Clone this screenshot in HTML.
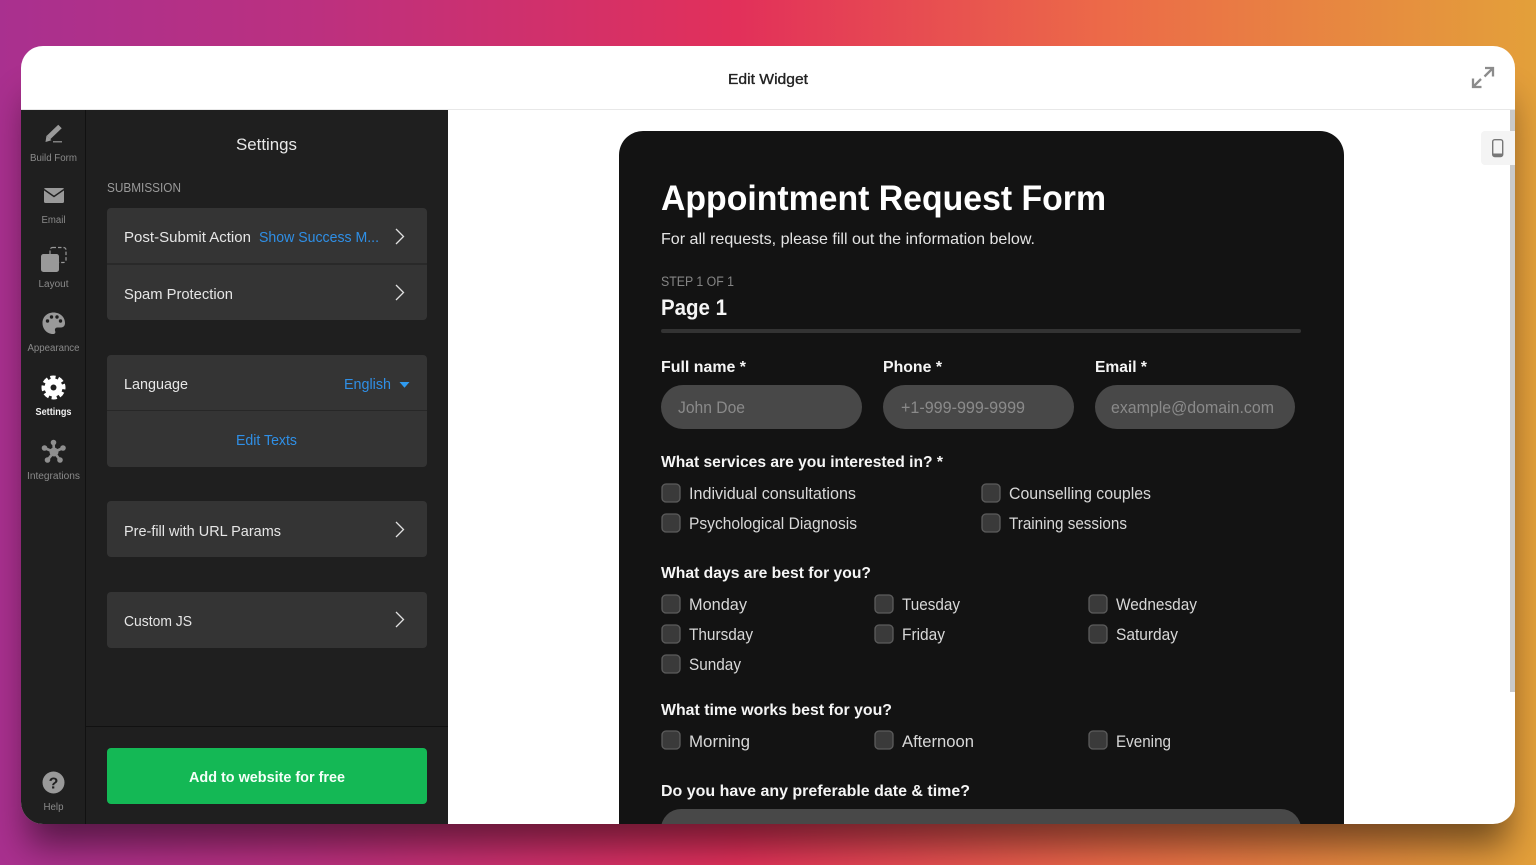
<!DOCTYPE html>
<html lang="en">
<head>
<meta charset="utf-8">
<title>Edit Widget</title>
<style>
html,body{margin:0;padding:0;width:1536px;height:865px;overflow:hidden;background:#c0306f}
svg{display:block}
text{font-family:"Liberation Sans",sans-serif;white-space:pre}
.b{font-weight:700}
.lab{fill:#e8e8e8;font-size:16px}
.q{fill:#f5f5f5;font-size:15.5px;font-weight:700}
.ph{fill:#8a8a8a;font-size:16.5px}
.opt{fill:#d8d8d8;font-size:16.5px}
.nav{fill:#8a8a8a;font-size:10px}
.cb{fill:#3a3a3a;stroke:#5c5c5c;stroke-width:1.3}
.row{fill:#e6e6e6;font-size:15px}
.blue{fill:#2f8fe6;font-size:15px}
.chev{fill:none;stroke:#e0e0e0;stroke-width:1.3}
</style>
</head>
<body>
<svg width="1536" height="865" viewBox="0 0 1536 865" xmlns="http://www.w3.org/2000/svg">
<defs>
<linearGradient id="bg" x1="0" y1="0" x2="1" y2="0">
<stop offset="0" stop-color="#a9308f"/>
<stop offset=".2" stop-color="#bb3080"/>
<stop offset=".48" stop-color="#e2305a"/>
<stop offset=".72" stop-color="#ec6a48"/>
<stop offset="1" stop-color="#e3a03a"/>
</linearGradient>
<filter id="sh" x="-10%" y="-15%" width="120%" height="130%"><feGaussianBlur stdDeviation="18"/></filter>
<clipPath id="win"><rect x="21" y="46" width="1494" height="778" rx="22"/></clipPath>
</defs>

<rect width="1536" height="865" fill="url(#bg)"/>
<rect x="28" y="100" width="1480" height="745" fill="#000" opacity=".5" filter="url(#sh)"/>

<g clip-path="url(#win)">
<rect x="21" y="46" width="1494" height="778" fill="#fff"/>
<rect x="21" y="109" width="1494" height="1" fill="#e8e8e8"/>
<rect x="21" y="110" width="427" height="714" fill="#1f1f1f"/>
<rect x="85" y="110" width="1" height="714" fill="#111"/>
<rect x="86" y="726" width="362" height="1" fill="#111"/>
<rect x="1510" y="110" width="5" height="582" fill="#c9c9c9"/>

<!-- form card -->
<rect x="619" y="131" width="725" height="760" rx="24" fill="#131313"/>
<text x="661" y="210" class="b" font-size="35" fill="#fff" textLength="445" lengthAdjust="spacingAndGlyphs">Appointment Request Form</text>
<text x="661" y="244" font-size="16" fill="#e4e4e4" textLength="374" lengthAdjust="spacingAndGlyphs">For all requests, please fill out the information below.</text>
<text x="661" y="286" font-size="13.5" fill="#858585" textLength="73" lengthAdjust="spacingAndGlyphs">STEP 1 OF 1</text>
<text x="661" y="315" class="b" font-size="22" fill="#f5f5f5" textLength="66" lengthAdjust="spacingAndGlyphs">Page 1</text>
<rect x="661" y="329" width="640" height="4" rx="2" fill="#333"/>

<text x="661" y="372" class="q" font-size="16" textLength="85" lengthAdjust="spacingAndGlyphs">Full name *</text>
<text x="883" y="372" class="q" textLength="59" lengthAdjust="spacingAndGlyphs">Phone *</text>
<text x="1095" y="372" class="q" textLength="52" lengthAdjust="spacingAndGlyphs">Email *</text>

<rect x="661" y="385" width="201" height="44" rx="22" fill="#484848"/>
<rect x="883" y="385" width="191" height="44" rx="22" fill="#484848"/>
<rect x="1095" y="385" width="200" height="44" rx="22" fill="#484848"/>
<text x="678" y="413" class="ph" textLength="67" lengthAdjust="spacingAndGlyphs">John Doe</text>
<text x="901" y="413" class="ph" textLength="124" lengthAdjust="spacingAndGlyphs">+1-999-999-9999</text>
<text x="1111" y="413" class="ph" textLength="163" lengthAdjust="spacingAndGlyphs">example@domain.com</text>

<text x="661" y="467" class="q" textLength="282" lengthAdjust="spacingAndGlyphs">What services are you interested in? *</text>
<rect class="cb" x="662" y="484" width="18" height="18" rx="4"/>
<rect class="cb" x="982" y="484" width="18" height="18" rx="4"/>
<rect class="cb" x="662" y="514" width="18" height="18" rx="4"/>
<rect class="cb" x="982" y="514" width="18" height="18" rx="4"/>
<text x="689" y="499" class="opt" textLength="167" lengthAdjust="spacingAndGlyphs">Individual consultations</text>
<text x="1009" y="499" class="opt" textLength="142" lengthAdjust="spacingAndGlyphs">Counselling couples</text>
<text x="689" y="529" class="opt" textLength="168" lengthAdjust="spacingAndGlyphs">Psychological Diagnosis</text>
<text x="1009" y="529" class="opt" textLength="118" lengthAdjust="spacingAndGlyphs">Training sessions</text>

<text x="661" y="578" class="q" textLength="210" lengthAdjust="spacingAndGlyphs">What days are best for you?</text>
<rect class="cb" x="662" y="595" width="18" height="18" rx="4"/>
<rect class="cb" x="875" y="595" width="18" height="18" rx="4"/>
<rect class="cb" x="1089" y="595" width="18" height="18" rx="4"/>
<rect class="cb" x="662" y="625" width="18" height="18" rx="4"/>
<rect class="cb" x="875" y="625" width="18" height="18" rx="4"/>
<rect class="cb" x="1089" y="625" width="18" height="18" rx="4"/>
<rect class="cb" x="662" y="655" width="18" height="18" rx="4"/>
<text x="689" y="610" class="opt" textLength="58" lengthAdjust="spacingAndGlyphs">Monday</text>
<text x="902" y="610" class="opt" textLength="58" lengthAdjust="spacingAndGlyphs">Tuesday</text>
<text x="1116" y="610" class="opt" textLength="81" lengthAdjust="spacingAndGlyphs">Wednesday</text>
<text x="689" y="640" class="opt" textLength="64" lengthAdjust="spacingAndGlyphs">Thursday</text>
<text x="902" y="640" class="opt" textLength="43" lengthAdjust="spacingAndGlyphs">Friday</text>
<text x="1116" y="640" class="opt" textLength="62" lengthAdjust="spacingAndGlyphs">Saturday</text>
<text x="689" y="670" class="opt" textLength="52" lengthAdjust="spacingAndGlyphs">Sunday</text>

<text x="661" y="715" class="q" textLength="231" lengthAdjust="spacingAndGlyphs">What time works best for you?</text>
<rect class="cb" x="662" y="731" width="18" height="18" rx="4"/>
<rect class="cb" x="875" y="731" width="18" height="18" rx="4"/>
<rect class="cb" x="1089" y="731" width="18" height="18" rx="4"/>
<text x="689" y="747" class="opt" textLength="61" lengthAdjust="spacingAndGlyphs">Morning</text>
<text x="902" y="747" class="opt" textLength="72" lengthAdjust="spacingAndGlyphs">Afternoon</text>
<text x="1116" y="747" class="opt" textLength="55" lengthAdjust="spacingAndGlyphs">Evening</text>

<text x="661" y="796" class="q" textLength="309" lengthAdjust="spacingAndGlyphs">Do you have any preferable date &amp; time?</text>
<rect x="661" y="809" width="640" height="60" rx="20" fill="#484848"/>

<!-- settings panel -->
<text x="266.500" y="150" text-anchor="middle" font-size="17" fill="#e8e8e8" textLength="61" lengthAdjust="spacingAndGlyphs">Settings</text>
<text x="107" y="192" font-size="12.500" fill="#9a9a9a" textLength="74" lengthAdjust="spacingAndGlyphs">SUBMISSION</text>

<rect x="107" y="208" width="320" height="112" rx="4" fill="#343434"/>
<rect x="107" y="263" width="320" height="2" fill="#292929"/>
<text x="124" y="242" class="row" textLength="127" lengthAdjust="spacingAndGlyphs">Post-Submit Action</text>
<text x="259" y="242" class="blue" textLength="120" lengthAdjust="spacingAndGlyphs">Show Success M...</text>
<path class="chev" d="M396 229l7.500 7.500-7.500 7.500"/>
<text x="124" y="299" class="row" textLength="109" lengthAdjust="spacingAndGlyphs">Spam Protection</text>
<path class="chev" d="M396 285l7.500 7.500-7.500 7.500"/>

<rect x="107" y="355" width="320" height="112" rx="4" fill="#343434"/>
<rect x="107" y="410" width="320" height="1" fill="#272727"/>
<text x="124" y="389" class="row" textLength="64" lengthAdjust="spacingAndGlyphs">Language</text>
<text x="344" y="389" class="blue" textLength="47" lengthAdjust="spacingAndGlyphs">English</text>
<path d="M399.500 382h10l-5 5.800z" fill="#2f9bf0"/>
<text x="236" y="445" class="blue" textLength="61" lengthAdjust="spacingAndGlyphs">Edit Texts</text>

<rect x="107" y="501" width="320" height="56" rx="4" fill="#343434"/>
<text x="124" y="536" class="row" textLength="157" lengthAdjust="spacingAndGlyphs">Pre-fill with URL Params</text>
<path class="chev" d="M396 522l7.500 7.500-7.500 7.500"/>

<rect x="107" y="592" width="320" height="56" rx="4" fill="#343434"/>
<text x="124" y="626" class="row" textLength="68" lengthAdjust="spacingAndGlyphs">Custom JS</text>
<path class="chev" d="M396 612l7.500 7.500-7.500 7.500"/>

<rect x="107" y="748" width="320" height="56" rx="4" fill="#14b855"/>
<text x="189" y="782" class="b" font-size="15" fill="#f4fff8" textLength="156" lengthAdjust="spacingAndGlyphs">Add to website for free</text>

<!-- sidebar icons -->
<path d="M48.500 137.500L60 126.500" stroke="#999" stroke-width="5" fill="none"/>
<path d="M45.500 142l1-6.500 5 4.800z" fill="#999"/>
<path d="M53 141.800h9" stroke="#999" stroke-width="1.200"/>
<text x="53.500" y="161" text-anchor="middle" class="nav" textLength="47" lengthAdjust="spacingAndGlyphs">Build Form</text>

<rect x="44" y="188" width="20" height="15" rx="1.500" fill="#999"/>
<path d="M44 189.500l10 7 10-7" stroke="#1f1f1f" stroke-width="1.400" fill="none"/>
<text x="53.500" y="223" text-anchor="middle" class="nav" textLength="24" lengthAdjust="spacingAndGlyphs">Email</text>

<rect x="50" y="247.500" width="16" height="15" rx="2.500" fill="none" stroke="#999" stroke-width="1.200" stroke-dasharray="3.500 2"/>
<rect x="41" y="254" width="18" height="18" rx="2.500" fill="#999"/>
<text x="53.500" y="287" text-anchor="middle" class="nav" textLength="30" lengthAdjust="spacingAndGlyphs">Layout</text>

<path d="M53.500 312.500c-6.500 0-11 4.500-11 10.500s4.500 11 10.500 11c2 0 2.800-1.300 2.200-2.800-.8-2 .2-3.700 2.300-3.700h3.500c2.500 0 4-1.800 4-4.500 0-6-5-10.500-11.500-10.500z" fill="#999"/>
<circle cx="47.500" cy="321" r="1.700" fill="#1f1f1f"/>
<circle cx="51.500" cy="317" r="1.700" fill="#1f1f1f"/>
<circle cx="57" cy="317" r="1.700" fill="#1f1f1f"/>
<circle cx="60.500" cy="321" r="1.700" fill="#1f1f1f"/>
<text x="53.500" y="351" text-anchor="middle" class="nav" textLength="52" lengthAdjust="spacingAndGlyphs">Appearance</text>

<circle cx="53.500" cy="387.500" r="9" fill="#fff"/>
<circle cx="53.500" cy="387.500" r="10" fill="none" stroke="#fff" stroke-width="4" stroke-dasharray="5 2.850" transform="rotate(-19 53.500 387.500)"/>
<circle cx="53.500" cy="387.500" r="3" fill="#1f1f1f"/>
<text x="53.500" y="415" text-anchor="middle" class="nav" style="fill:#f0f0f0;font-weight:700" textLength="36" lengthAdjust="spacingAndGlyphs">Settings</text>

<g fill="#8f8f8f" stroke="#8f8f8f">
<path stroke-width="2.600" d="M54 452L53.500 442.500M54 452L44.500 448M54 452L63 448M54 452L47.500 460M54 452L60 460"/>
<circle cx="54" cy="452" r="4.500" stroke="none"/>
<circle cx="53.500" cy="442.500" r="2.800" stroke="none"/>
<circle cx="44.500" cy="448" r="2.800" stroke="none"/>
<circle cx="63" cy="448" r="2.800" stroke="none"/>
<circle cx="47.500" cy="460" r="2.800" stroke="none"/>
<circle cx="60" cy="460" r="2.800" stroke="none"/>
</g>
<text x="53.500" y="479" text-anchor="middle" class="nav" textLength="53" lengthAdjust="spacingAndGlyphs">Integrations</text>

<circle cx="53.500" cy="782.500" r="11" fill="#999"/>
<text x="53.500" y="788.500" text-anchor="middle" class="b" font-size="16" fill="#1f1f1f">?</text>
<text x="53.500" y="810" text-anchor="middle" class="nav" textLength="20" lengthAdjust="spacingAndGlyphs">Help</text>

<!-- header -->
<text x="728" y="84" font-size="15" fill="#222" stroke="#222" stroke-width=".35" textLength="80" lengthAdjust="spacingAndGlyphs">Edit Widget</text>
<path d="M1485 68h8v8.500M1493 68L1484.500 76.500M1473 78.500V87h8.500M1473 87L1481 79" fill="none" stroke="#8c8c8c" stroke-width="2.300"/>

<!-- device toggle -->
<path d="M1481 135a4 4 0 0 1 4-4h30v34h-30a4 4 0 0 1-4-4z" fill="#f4f4f4"/>
<rect x="1492.700" y="139.700" width="10" height="16.800" rx="2" fill="none" stroke="#777" stroke-width="1.400"/>
<rect x="1493" y="153.500" width="9.500" height="3" fill="#777"/>
</g>
</svg>
</body>
</html>
